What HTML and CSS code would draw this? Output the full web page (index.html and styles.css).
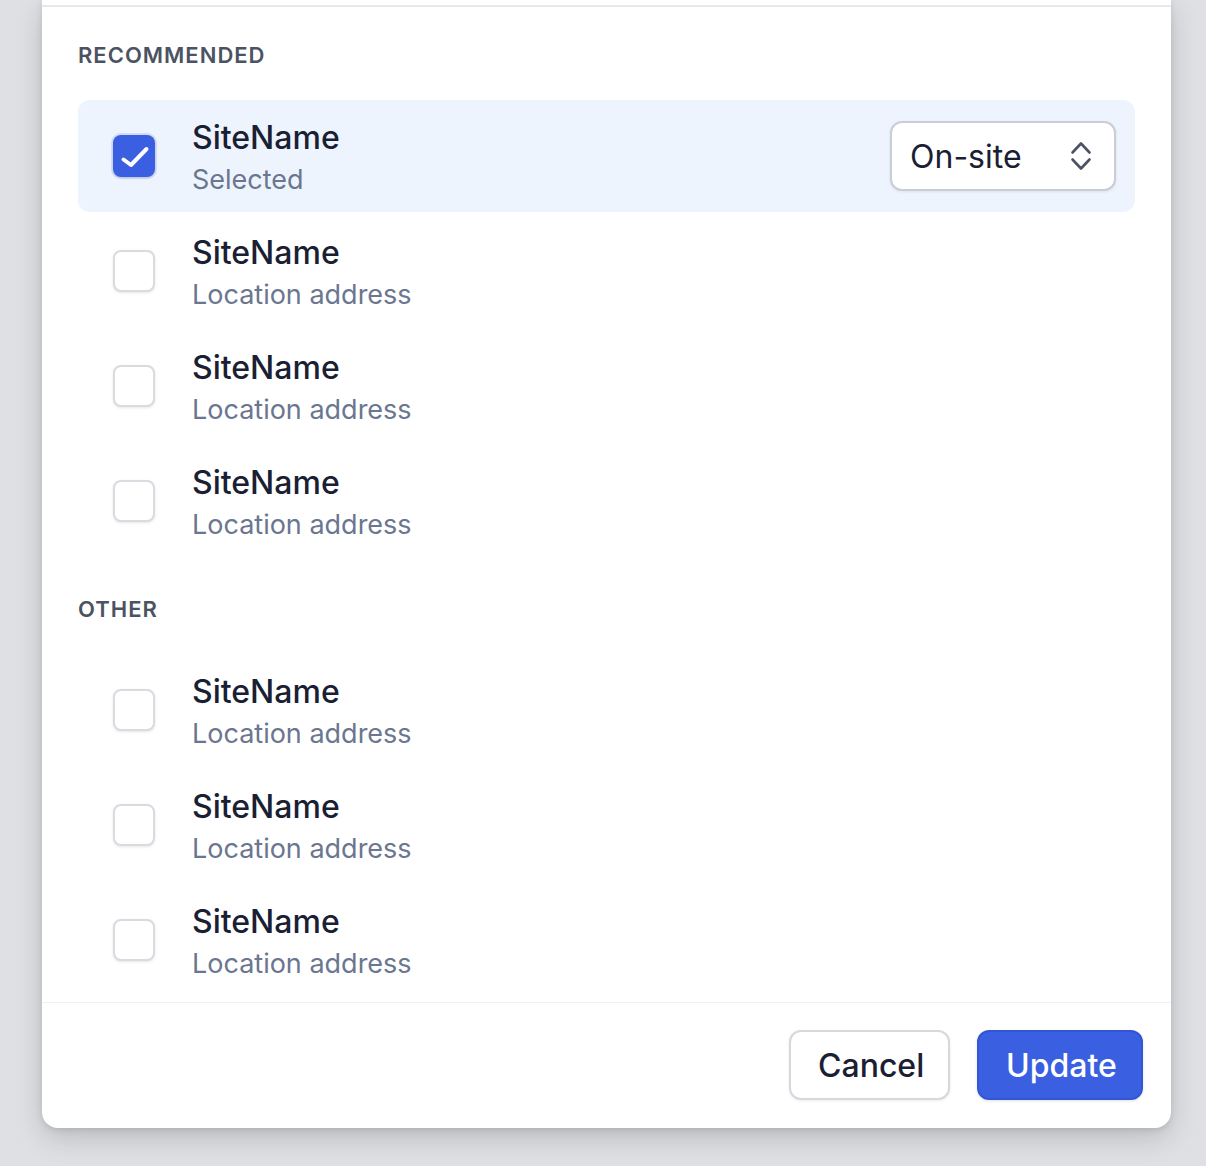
FILE: index.html
```html
<!DOCTYPE html>
<html>
  <head>
    <title>Choose sites</title>
    <link rel="stylesheet" href="styles.css">
  </head>
  <body>
    <div class="page">
      <div class="modal">
        <div class="modal-header"></div>

        <div class="modal-body">
          <!-- recommended sites -->
          <div class="section">
            <h3 class="section-label">Recommended</h3>
            <div class="site-list">
              <label class="site-row selected">
                <span class="checkbox checked">
                  <svg width="42" height="42" viewBox="0 0 42 42"><path d="M10.5 24.5 L18 30 L33.5 14" fill="none" stroke="#fff" stroke-width="4" stroke-linecap="round" stroke-linejoin="round"/></svg>
                </span>
                <span class="site-text">
                  <span class="site-name">SiteName</span>
                  <span class="site-sub">Selected</span>
                </span>
                <span class="select">
                  <span class="select-value">On-site</span>
                  <svg class="select-icon" width="22" height="30" viewBox="0 0 22 30"><path d="M2.5 11.5 L11 2.5 L19.5 11.5 M2.5 18.5 L11 27.5 L19.5 18.5" fill="none" stroke="#4b5363" stroke-width="2.6" stroke-linecap="round" stroke-linejoin="round"/></svg>
                </span>
              </label>
              <label class="site-row">
                <span class="checkbox"></span>
                <span class="site-text">
                  <span class="site-name">SiteName</span>
                  <span class="site-sub">Location address</span>
                </span>
              </label>
              <label class="site-row">
                <span class="checkbox"></span>
                <span class="site-text">
                  <span class="site-name">SiteName</span>
                  <span class="site-sub">Location address</span>
                </span>
              </label>
              <label class="site-row">
                <span class="checkbox"></span>
                <span class="site-text">
                  <span class="site-name">SiteName</span>
                  <span class="site-sub">Location address</span>
                </span>
              </label>
            </div>
          </div>

          <!-- other sites -->
          <div class="section">
            <h3 class="section-label">Other</h3>
            <div class="site-list">
              <label class="site-row">
                <span class="checkbox"></span>
                <span class="site-text">
                  <span class="site-name">SiteName</span>
                  <span class="site-sub">Location address</span>
                </span>
              </label>
              <label class="site-row">
                <span class="checkbox"></span>
                <span class="site-text">
                  <span class="site-name">SiteName</span>
                  <span class="site-sub">Location address</span>
                </span>
              </label>
              <label class="site-row">
                <span class="checkbox"></span>
                <span class="site-text">
                  <span class="site-name">SiteName</span>
                  <span class="site-sub">Location address</span>
                </span>
              </label>
            </div>
          </div>
        </div>

        <div class="modal-footer">
          <button class="btn btn-secondary">Cancel</button>
          <button class="btn btn-primary">Update</button>
        </div>
      </div>
    </div>
  </body>
</html>
```

FILE: styles.css
```css
body {
  margin: 0;
  background: #dfe0e4;
  font-family: Inter, "Noto Sans", sans-serif;
}
.page {
  padding: 0 35px 0 42px;
  height: 1166px;
  box-sizing: border-box;
}

/* modal */
.modal {
  width: 1129px;
  background: #fff;
  border-radius: 0 0 16px 16px;
  box-shadow: 0 10px 28px rgba(0, 0, 0, 0.16), 0 2px 6px rgba(0, 0, 0, 0.1);
}
.modal-header {
  height: 5px;
  border-bottom: 2px solid #e6e8ee;
}
.modal-body {
  padding: 32px 36px 6px;
}
.section + .section {
  margin-top: 36px;
}
.section-label {
  margin: 0 0 29px 0;
  font-size: 22px;
  line-height: 32px;
  font-weight: 600;
  letter-spacing: 1px;
  text-transform: uppercase;
  color: #4b5363;
}
.site-list {
  display: flex;
  flex-direction: column;
  gap: 3px;
}
.site-row {
  display: flex;
  align-items: center;
  height: 112px;
  padding: 0 19px 0 35px;
  border-radius: 12px;
}
.site-row.selected {
  background: #eef4fd;
}
.checkbox {
  flex: none;
  width: 42px;
  height: 42px;
  box-sizing: border-box;
  border: 2px solid #d9dbe1;
  border-radius: 8px;
  background: #fff;
  box-shadow: 0 1px 3px rgba(0, 0, 0, 0.1);
}
.checkbox.checked {
  border: none;
  background: #3a5fe0;
  box-shadow: 0 0 0 2px rgba(58, 95, 224, 0.15), 0 1px 3px rgba(0, 0, 0, 0.12);
}
.checkbox svg {
  display: block;
}
.site-text {
  display: flex;
  flex-direction: column;
  margin: 5px 0 0 37px;
  flex: 1;
}
.site-name {
  font-size: 32px;
  line-height: 40px;
  font-weight: 500;
  color: #1a2033;
}
.site-sub {
  margin-top: 2px;
  font-size: 27px;
  line-height: 40px;
  color: #6b7690;
}

/* select */
.select {
  display: flex;
  align-items: center;
  justify-content: space-between;
  width: 226px;
  height: 70px;
  box-sizing: border-box;
  padding: 0 22px 0 18px;
  background: #fff;
  border: 2px solid #cacdd5;
  border-radius: 12px;
  box-shadow: 0 1px 3px rgba(0, 0, 0, 0.08);
}
.select-value {
  font-size: 32px;
  color: #1a2033;
}
.select-icon {
  display: block;
}

/* footer */
.modal-footer {
  display: flex;
  justify-content: flex-end;
  gap: 27px;
  padding: 27px 28px 28px;
  border-top: 1px solid #eff0f3;
}
.btn {
  height: 70px;
  padding: 0 27px;
  border-radius: 12px;
  font-family: inherit;
  font-size: 32px;
  font-weight: 500;
  cursor: pointer;
  box-sizing: border-box;
}
.btn-secondary {
  width: 161px;
  background: #fff;
  border: 2px solid #d6d8de;
  color: #1a2033;
  box-shadow: 0 1px 3px rgba(0, 0, 0, 0.08);
}
.btn-primary {
  width: 166px;
  background: #3a5fe0;
  border: 2px solid #3256d6;
  color: #fff;
  box-shadow: 0 1px 3px rgba(0, 0, 0, 0.12);
}
```
